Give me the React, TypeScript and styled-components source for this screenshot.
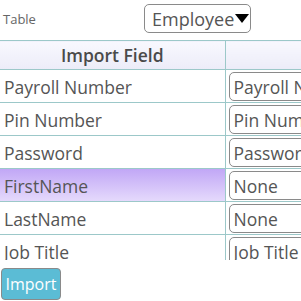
import React from 'react';
import styled, { createGlobalStyle } from 'styled-components';

const GlobalStyle = createGlobalStyle`
  body {
    margin: 0;
    background: #ffffff;
    font-family: "Open Sans", "DejaVu Sans", sans-serif;
  }
`;

const Page = styled.div`
  width: 301px;
  height: 301px;
  overflow: hidden;
  display: flex;
  flex-direction: column;
`;

const TopBar = styled.div`
  height: 40px;
  display: grid;
  grid-template-columns: 144px auto;
  align-items: center;
`;

const Label = styled.span`
  padding-left: 3px;
  font-size: 13px;
  color: #666;
  margin-top: -2px;
`;

const Picker = styled.div`
  width: 107px;
  height: 29px;
  box-sizing: border-box;
  border: 1px solid #8a8a8a;
  border-radius: 5px;
  display: flex;
  align-items: center;
  justify-content: space-between;
  padding: 0 1px 0 7px;
  font-size: 18px;
  color: #555;
  margin-top: -3px;
`;

const Arrow = styled.span`
  width: 0;
  height: 0;
  border-left: 7px solid transparent;
  border-right: 7px solid transparent;
  border-top: 9px solid #000;
  margin-bottom: 1px;
`;

const TableWrap = styled.div`
  height: 220px;
  overflow: hidden;
`;

const Grid = styled.table`
  border-collapse: collapse;
  width: 460px;
  table-layout: fixed;
`;

const HeadCell = styled.th`
  height: 28px;
  padding: 0;
  font-size: 17.5px;
  font-weight: 600;
  color: #4a4a4a;
  text-align: center;
  background: linear-gradient(#f8f8fe, #ececf8);
  border-top: 1px solid #9cc8c9;
  border-bottom: 1px solid #9cc8c9;
  border-right: 1px solid #9cc8c9;
`;

const Row = styled.tr<{ $active?: boolean }>`
  background: ${p => (p.$active ? 'linear-gradient(#c1a7f6, #e6dbfc)' : '#ffffff')};
`;

const NameCell = styled.td`
  height: 32px;
  padding: 2px 0 0 4px;
  box-sizing: border-box;
  font-size: 17.5px;
  color: #555;
  white-space: nowrap;
  border-bottom: 1px solid #9cc8c9;
  border-right: 1px solid #9cc8c9;
`;

const FieldCell = styled.td`
  height: 32px;
  padding: 0 0 0 3px;
  border-bottom: 1px solid #9cc8c9;
  background: #ffffff;
`;

const FieldBox = styled.div`
  width: 220px;
  height: 29px;
  box-sizing: border-box;
  border: 1px solid #8a8a8a;
  border-radius: 5px;
  padding: 1px 4px 0;
  font-size: 17.5px;
  line-height: 27px;
  color: #555;
  white-space: nowrap;
  overflow: hidden;
`;

const ImportButton = styled.button`
  margin: 8px 0 0 1px;
  width: 60px;
  height: 32px;
  box-sizing: border-box;
  border: 1px solid #8a8a8a;
  border-radius: 4px;
  background: #5bbcd5;
  color: #ffffff;
  font-family: "Open Sans", "DejaVu Sans", sans-serif;
  font-size: 16px;
  padding: 0;
  text-align: center;
`;

const rows = [
  { name: 'Payroll Number', value: 'Payroll Number' },
  { name: 'Pin Number', value: 'Pin Number' },
  { name: 'Password', value: 'Password' },
  { name: 'FirstName', value: 'None', active: true },
  { name: 'LastName', value: 'None' },
  { name: 'Job Title', value: 'Job Title' },
];

const App: React.FC = () => (
  <>
    <GlobalStyle />
    <Page>
      <TopBar>
        <Label>Table</Label>
        <Picker>
          Employee
          <Arrow />
        </Picker>
      </TopBar>
      <TableWrap>
        <Grid>
          <colgroup>
            <col style={{ width: 225 }} />
            <col />
          </colgroup>
          <thead>
            <tr>
              <HeadCell>Import Field</HeadCell>
              <HeadCell />
            </tr>
          </thead>
          <tbody>
            {rows.map(r => (
              <Row key={r.name} $active={r.active}>
                <NameCell>{r.name}</NameCell>
                <FieldCell>
                  <FieldBox>{r.value}</FieldBox>
                </FieldCell>
              </Row>
            ))}
          </tbody>
        </Grid>
      </TableWrap>
      <ImportButton>Import</ImportButton>
    </Page>
  </>
);

export default App;
